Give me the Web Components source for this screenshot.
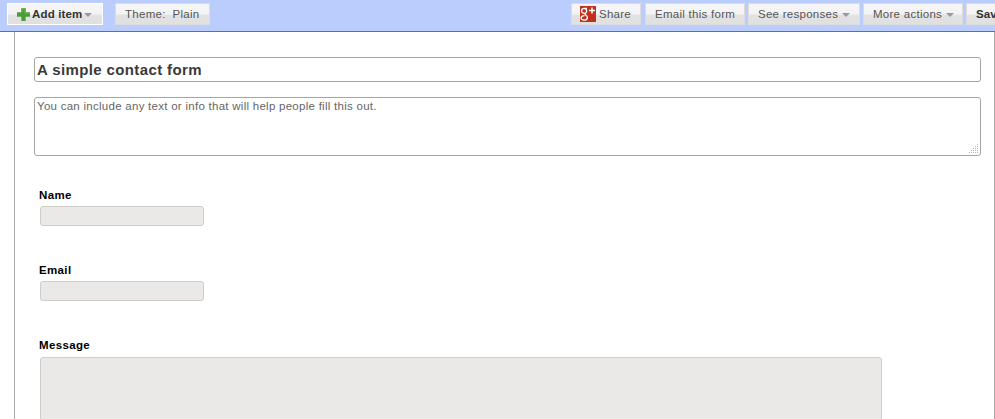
<!DOCTYPE html>
<html>
<head>
<meta charset="utf-8">
<style>
  html, body { margin: 0; height: 100%; overflow: hidden; background: #fff; font-family: "Liberation Sans", Arial, sans-serif; }
</style>
</head>
<body>
<form-editor></form-editor>
<script>
const buttonTemplate = document.createElement('template');
buttonTemplate.innerHTML = `
<style>
  :host {
    display: inline-flex;
    align-items: center;
    flex: none;
    box-sizing: border-box;
    height: 22px;
    padding: 0 9px;
    gap: 4px;
    border: 1px solid #dcdcdc;
    background: linear-gradient(#f6f6f6 0, #f3f3f3 50%, #e2e2e2 56%, #e0e0e0 100%);
    color: #555;
    font: 11.5px "Liberation Sans", Arial, sans-serif;
    letter-spacing: .27px;
    white-space: pre;
    cursor: default;
  }
  :host([strong]) { color: #333; font-weight: bold; letter-spacing: .15px; }
  :host([white]) { border-color: #fff; }
  .arrow {
    display: none;
    width: 0; height: 0;
    margin-top: 2px;
    border: 4px solid transparent;
    border-top-color: #999;
    border-bottom: 0;
  }
  :host([menu]) .arrow { display: block; }
  ::slotted(svg) { display: block; flex: none; }
</style>
<slot name="icon"></slot><slot></slot><span class="arrow"></span>
`;

class ToolButton extends HTMLElement {
  constructor() {
    super();
    this.attachShadow({ mode: 'open' }).appendChild(buttonTemplate.content.cloneNode(true));
  }
}
customElements.define('tool-button', ToolButton);

const toolbarTemplate = document.createElement('template');
toolbarTemplate.innerHTML = `
<style>
  :host {
    display: flex;
    box-sizing: border-box;
    height: 32px;
    padding: 3px 0 0 7px;
    background: #bbcdfc;
    border-bottom: 1px solid #6b6f80;
    overflow: hidden;
  }
  .left { display: flex; gap: 12px; flex: none; width: 564px; }
  .right { display: flex; gap: 3px; flex: none; }
  #add { width: 96px; padding: 0 9px; gap: 2px; }
  #add svg { margin-top: 1px; }
  #theme { width: 95px; }
  #share { width: 70px; padding: 0 8px; gap: 3px; margin-right: 1px; }
  #email { width: 100px; }
  #see { width: 112px; }
  #more { width: 100px; }
  #save { width: 60px; }
</style>
<div class="left">
  <tool-button id="add" strong white menu><svg slot="icon" width="13" height="13" viewBox="1 1 12 12"><path d="M5 1h4v4h4v4H9v4H5V9H1V5h4z" fill="#4f9a3b"/><path d="M5 1h4v4h4v1H8V2H6v3H5z" fill="#6cb84f"/></svg>Add item</tool-button>
  <tool-button id="theme">Theme:  Plain</tool-button>
</div>
<div class="right">
  <tool-button id="share"><svg slot="icon" width="16" height="16" viewBox="0 0 16 16">
      <rect width="16" height="16" fill="#c0301f"/>
      <path d="M7 2.4H4.2C2.6 2.4 1.6 3.5 1.6 4.9c0 1.4 1.1 2.4 2.5 2.4h1M4.4 2.6c1.5 0 2.3 1.2 2.3 2.4 0 1.2-.7 1.8-1.3 2.3-.6.5-.5 1 0 1.4.9.7 2 1.3 2 2.7 0 1.5-1.4 2.7-3.3 2.7-1.8 0-3-.9-3-2.1 0-1.4 1.4-2.4 3.4-2.4" fill="none" stroke="#fff" stroke-width="1.3"/>
      <path d="M12 1.5v6M9 4.5h6" stroke="#fff" stroke-width="1.5"/>
    </svg>Share</tool-button>
  <tool-button id="email">Email this form</tool-button>
  <tool-button id="see" menu>See responses</tool-button>
  <tool-button id="more" menu>More actions</tool-button>
  <tool-button id="save" strong>Save</tool-button>
</div>
`;

class EditorToolbar extends HTMLElement {
  constructor() {
    super();
    this.attachShadow({ mode: 'open' }).appendChild(toolbarTemplate.content.cloneNode(true));
  }
}
customElements.define('editor-toolbar', EditorToolbar);

const boxTemplate = document.createElement('template');
boxTemplate.innerHTML = `
<style>
  :host {
    display: block;
    position: relative;
    box-sizing: border-box;
    border: 1px solid #a8a4a0;
    border-radius: 3px;
    background: #fff;
    padding: 1px 2px;
  }
  :host([kind="title"]) {
    height: 25px;
    color: #3a3a3a;
    font: bold 15px/21px "Liberation Sans", Arial, sans-serif;
    letter-spacing: .38px;
  }
  :host([kind="desc"]) {
    height: 59px;
    color: #666;
    font: 11.5px/14px "Liberation Sans", Arial, sans-serif;
    letter-spacing: .27px;
  }
  svg { display: none; position: absolute; right: 1px; bottom: 1px; }
  :host([kind="desc"]) svg { display: block; }
</style>
<slot></slot>
<svg width="11" height="11" viewBox="0 0 11 11" fill="#b5b5b5">
  <rect x="9" y="1" width="1" height="1"/>
  <rect x="7" y="3" width="1" height="1"/><rect x="9" y="3" width="1" height="1"/>
  <rect x="5" y="5" width="1" height="1"/><rect x="7" y="5" width="1" height="1"/><rect x="9" y="5" width="1" height="1"/>
  <rect x="1" y="9" width="1" height="1"/><rect x="3" y="7" width="1" height="1"/><rect x="3" y="9" width="1" height="1"/>
  <rect x="5" y="7" width="1" height="1"/><rect x="5" y="9" width="1" height="1"/><rect x="7" y="7" width="1" height="1"/>
  <rect x="7" y="9" width="1" height="1"/><rect x="9" y="7" width="1" height="1"/><rect x="9" y="9" width="1" height="1"/>
</svg>
`;

class EditBox extends HTMLElement {
  constructor() {
    super();
    this.attachShadow({ mode: 'open' }).appendChild(boxTemplate.content.cloneNode(true));
  }
}
customElements.define('edit-box', EditBox);

const fieldTemplate = document.createElement('template');
fieldTemplate.innerHTML = `
<style>
  :host { display: block; }
  label {
    display: block;
    height: 18px;
    margin-left: -1px;
    color: #000;
    font: bold 11.5px/14px "Liberation Sans", Arial, sans-serif;
    letter-spacing: .35px;
  }
  .input {
    box-sizing: border-box;
    width: 164px;
    height: 20px;
    background: #ebe9e7;
    border: 1px solid #cfcdcb;
    border-radius: 3px;
  }
  :host([area]) .input { width: 842px; height: 120px; margin-top: 1px; }
</style>
<label></label>
<div class="input"></div>
`;

class FormField extends HTMLElement {
  constructor() {
    super();
    this.attachShadow({ mode: 'open' }).appendChild(fieldTemplate.content.cloneNode(true));
    this.shadowRoot.querySelector('label').textContent = this.getAttribute('label');
  }
}
customElements.define('form-field', FormField);

const editorTemplate = document.createElement('template');
editorTemplate.innerHTML = `
<style>
  :host { display: flex; flex-direction: column; height: 100%; overflow: hidden; }
  .page {
    flex: 1;
    box-sizing: border-box;
    margin-left: 14px;
    border-left: 1px solid #a8a8a8;
    border-right: 1px solid #a8a8a8;
    padding: 25px 13px 0 19px;
    overflow: hidden;
  }
  edit-box + edit-box { margin-top: 15px; }
  .fields {
    display: flex;
    flex-direction: column;
    gap: 37px;
    margin: 32px 0 0 6px;
  }
</style>
<editor-toolbar></editor-toolbar>
<div class="page">
  <edit-box kind="title">A simple contact form</edit-box>
  <edit-box kind="desc">You can include any text or info that will help people fill this out.</edit-box>
  <div class="fields">
    <form-field label="Name"></form-field>
    <form-field label="Email"></form-field>
    <form-field label="Message" area></form-field>
  </div>
</div>
`;

class FormEditor extends HTMLElement {
  constructor() {
    super();
    this.attachShadow({ mode: 'open' }).appendChild(editorTemplate.content.cloneNode(true));
  }
}
customElements.define('form-editor', FormEditor);
</script>
</body>
</html>
